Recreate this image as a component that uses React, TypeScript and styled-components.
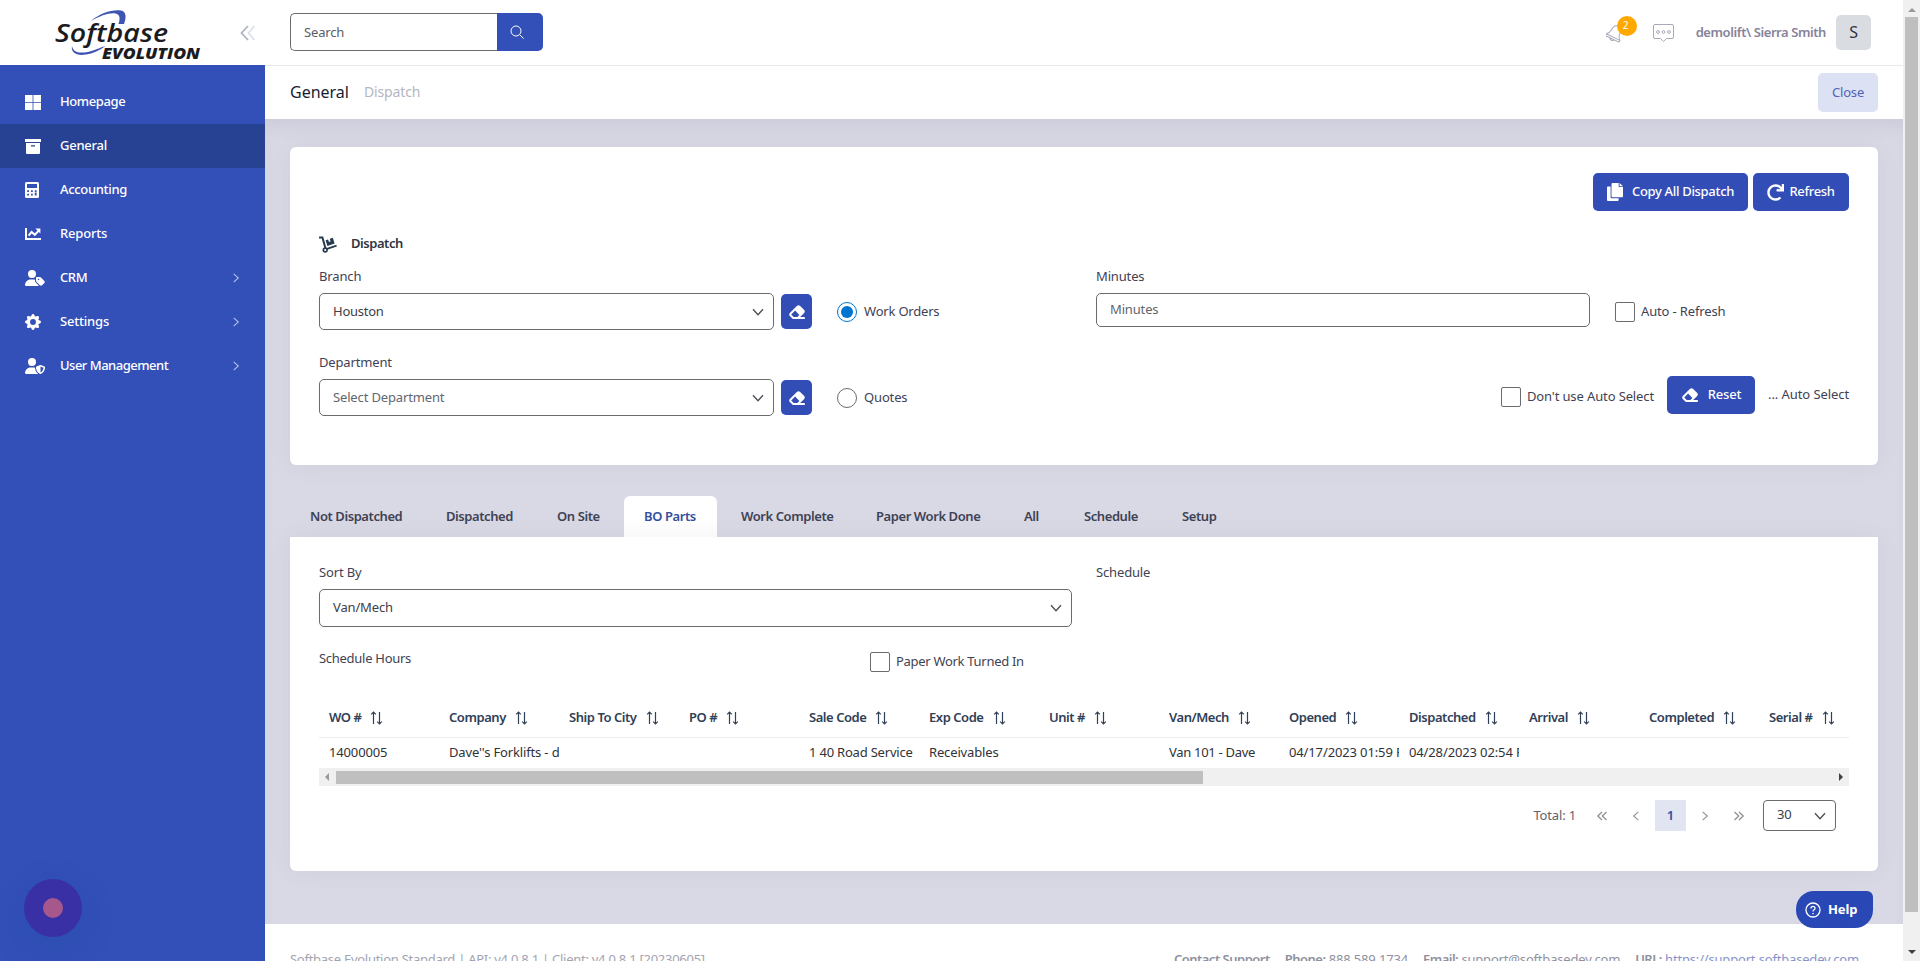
import React from 'react';
import styled, { createGlobalStyle } from 'styled-components';
import { BsGearFill } from 'react-icons/bs';
import { FaEraser, FaUserShield, FaUserTag } from 'react-icons/fa6';
import { FaRedo } from 'react-icons/fa';

const GlobalStyle = createGlobalStyle`
  * {
    box-sizing: border-box;
  }

  body {
    margin: 0;
    overflow: hidden;
    font-family: 'Noto Sans', 'Open Sans', sans-serif;
    font-size: 13px;
    line-height: 20px;
    letter-spacing: -0.15px;
    color: #3f4254;
  }
`;

interface FitProps {
  $ls?: number;
}

interface MenuEntry {
  label: string;
  icon: React.ReactNode;
  active?: boolean;
  expandable?: boolean;
  spacing?: number;
}

interface ColumnType {
  title: string;
  value?: string;
  spacing?: number;
}

const Page = styled.div`
  display: flex;
  width: 1920px;
  height: 961px;
  overflow: hidden;
  background: #fff;
`;

const Sidebar = styled.aside`
  position: relative;
  display: flex;
  flex-direction: column;
  flex: 0 0 265px;
  background: #334fb8;
`;

const Brand = styled.div`
  display: flex;
  align-items: center;
  height: 65px;
  padding-left: 50px;
  background: #fff;

  .collapse {
    margin-left: 30px;
  }
`;

const Menu = styled.nav`
  display: flex;
  flex-direction: column;
  padding-top: 15px;
`;

const MenuItem = styled.div<{ $active?: boolean }>`
  display: flex;
  align-items: center;
  height: 44px;
  padding: 0 24px 0 25px;
  color: #fff;
  font-weight: 500;
  background: ${(p) => (p.$active ? '#284293' : 'transparent')};

  .icon {
    display: flex;
    width: 35px;
  }

  .label {
    flex: 1;
  }
`;

const Text = styled.span<FitProps>`
  padding-bottom: 2px;
  white-space: nowrap;
  letter-spacing: ${(p) => (p.$ls === undefined ? -0.15 : p.$ls)}px;
`;

const Recorder = styled.div`
  position: absolute;
  left: 24px;
  top: 879px;
  display: flex;
  align-items: center;
  justify-content: center;
  width: 58px;
  height: 58px;
  border-radius: 50%;
  background: #3830a4;
  box-shadow: 0 10px 30px rgba(30, 80, 160, 0.35);

  &::after {
    content: '';
    width: 20px;
    height: 20px;
    border-radius: 50%;
    background: #a6588c;
  }
`;

const Main = styled.div`
  display: flex;
  flex-direction: column;
  flex: 0 0 1638px;
`;

const Header = styled.header`
  display: flex;
  align-items: center;
  justify-content: space-between;
  flex: 0 0 66px;
  padding: 0 32px 0 25px;
  border-bottom: 1px solid #e8e9ee;
`;

const SearchBox = styled.div`
  display: flex;
  width: 253px;
  height: 38px;
  margin-bottom: 1px;

  .field {
    flex: 1;
    padding: 8px 13px;
    border: 1px solid #6b6b6f;
    border-right: 0;
    border-radius: 5px 0 0 5px;
    color: #595d66;
  }

  .go {
    display: flex;
    align-items: center;
    justify-content: center;
    width: 46px;
    padding-right: 6px;
    border-radius: 0 5px 5px 0;
    background: #334fb8;
  }
`;

const UserBar = styled.div`
  display: flex;
  align-items: center;
  height: 100%;

  .name {
    margin-left: 22px;
    color: #87839a;
    font-weight: 600;
  }
`;

const Bell = styled.div`
  position: relative;
  display: flex;
  width: 47px;
  height: 20px;
`;

const Badge = styled.span`
  position: absolute;
  left: 11px;
  top: -7px;
  width: 20px;
  height: 20px;
  border-radius: 50%;
  background: #ffa800;
  color: #fff;
  font-size: 10px;
  line-height: 19px;
  padding-left: 6px;
`;

const Avatar = styled.div`
  width: 35px;
  height: 35px;
  margin-left: 10px;
  border-radius: 5px;
  background: #d9dde2;
  color: #2f3344;
  font-size: 16px;
  line-height: 35px;
  text-align: center;
`;

const SubHeader = styled.div`
  display: flex;
  align-items: center;
  flex: 0 0 53px;
  padding: 0 25px;

  .title {
    color: #181c32;
    font-size: 16px;
  }

  .crumb {
    flex: 1;
    margin-left: 15px;
    color: #b5b5c3;
    font-size: 14px;
  }
`;

const CloseButton = styled.button`
  width: 60px;
  height: 39px;
  padding: 0 0 2px;
  border: 0;
  border-radius: 5px;
  background: #dce1f4;
  color: #5064b8;
  font: inherit;
  letter-spacing: -0.15px;
`;

const Content = styled.main`
  display: flex;
  flex-direction: column;
  flex: 0 0 805px;
  padding: 28px 25px 0;
  background: #d9d9e5;
  box-shadow: inset 0 14px 20px -10px rgba(100, 95, 130, 0.14);
`;

const FilterCard = styled.section`
  display: flex;
  flex-direction: column;
  height: 318px;
  padding: 26px 29px;
  border-radius: 6px;
  background: #fff;
  box-shadow: 0 0 24px rgba(80, 75, 115, 0.07);
`;

const Actions = styled.div`
  display: flex;
  justify-content: flex-end;
  gap: 5px;
`;

const Button = styled.button<{ $width: number; $gap: number }>`
  display: flex;
  align-items: center;
  justify-content: center;
  gap: ${(p) => p.$gap}px;
  width: ${(p) => p.$width}px;
  height: 38px;
  padding: 0;
  border: 0;
  border-radius: 5px;
  background: #324db5;
  color: #fff;
  font: inherit;
  font-weight: 500;
`;

const SectionTitle = styled.div`
  display: flex;
  align-items: center;
  gap: 14px;
  height: 24px;
  margin-top: 21px;
  color: #30353f;
  font-weight: 600;
`;

const FilterGrid = styled.div`
  display: grid;
  grid-template-columns: 777px 1fr;
  grid-auto-rows: 86px;
  padding-top: 10px;
`;

const Column = styled.div`
  display: flex;
  flex-direction: column;
`;

const Label = styled.div<FitProps>`
  height: 20px;
  margin-bottom: 7px;
  white-space: nowrap;
  letter-spacing: ${(p) => (p.$ls === undefined ? -0.15 : p.$ls)}px;
`;

const FieldRow = styled.div<{ $end?: boolean; $height?: number }>`
  display: flex;
  align-items: center;
  justify-content: ${(p) => (p.$end ? 'flex-end' : 'flex-start')};
  height: ${(p) => p.$height || 37}px;
  margin-top: ${(p) => (p.$end ? 24 : 0)}px;
`;

const Field = styled.div<{ $width: number; $height?: number; $muted?: boolean }>`
  display: flex;
  align-items: center;
  align-self: flex-start;
  justify-content: space-between;
  width: ${(p) => p.$width}px;
  height: ${(p) => p.$height || 37}px;
  padding: 0 9px 0 13px;
  border: 1px solid #6b6b6f;
  border-radius: 5px;
  color: ${(p) => (p.$muted ? '#62666e' : '#3c4048')};
`;

const EraseButton = styled(Button)`
  height: 35px;
  margin: 0 25px 0 7px;
`;

const Radio = styled.span<{ $checked?: boolean }>`
  display: flex;
  align-items: center;
  justify-content: center;
  width: 20px;
  height: 20px;
  margin-right: 7px;
  border: 1px solid ${(p) => (p.$checked ? '#0075d0' : '#6b6b6f')};
  border-radius: 50%;

  &::after {
    content: '';
    width: 12px;
    height: 12px;
    border-radius: 50%;
    background: ${(p) => (p.$checked ? '#0075d0' : 'transparent')};
  }
`;

const Checkbox = styled.span`
  width: 20px;
  height: 20px;
  margin-right: 6px;
  border: 1px solid #6b6b6f;
  border-radius: 2px;
`;

const Option = styled.label<{ $left?: number; $drop?: number }>`
  display: flex;
  align-items: center;
  margin-left: ${(p) => p.$left || 0}px;
  padding-top: ${(p) => p.$drop || 0}px;
`;

const ResetButton = styled(Button)`
  margin: 0 13px;
`;

const Tabs = styled.div`
  display: flex;
  gap: 4px;
  height: 41px;
  margin-top: 31px;
`;

const Tab = styled.div<{ $active?: boolean; $width: number }>`
  width: ${(p) => p.$width}px;
  padding: 10px 0 0 20px;
  border-radius: 6px 6px 0 0;
  background: ${(p) => (p.$active ? '#fff' : 'transparent')};
  color: ${(p) => (p.$active ? '#334f9f' : '#3f4254')};
  font-weight: 600;
  white-space: nowrap;
  letter-spacing: -0.42px;
`;

const ResultCard = styled.section`
  display: flex;
  flex-direction: column;
  height: 334px;
  padding: 25px 29px 0;
  border-radius: 0 0 6px 6px;
  background: #fff;
  box-shadow: 0 0 24px rgba(80, 75, 115, 0.07);
`;

const SortRow = styled.div`
  display: grid;
  grid-template-columns: 777px 1fr;
  height: 86px;
`;

const HoursRow = styled.div`
  display: grid;
  grid-template-columns: 551px 1fr;
  height: 47px;
`;

const Table = styled.div`
  overflow: hidden;
  width: 1530px;
`;

const TableRow = styled.div<{ $head?: boolean }>`
  display: flex;
  height: ${(p) => (p.$head ? 43 : 30)}px;
  padding-top: ${(p) => (p.$head ? 4 : 0)}px;
  border-bottom: ${(p) => (p.$head ? '1px solid #ebedf3' : '0')};
  color: ${(p) => (p.$head ? '#304056' : '#303238')};
  font-weight: ${(p) => (p.$head ? 600 : 400)};
`;

const Cell = styled.div`
  display: flex;
  align-items: center;
  gap: 9px;
  flex: 0 0 120px;
  padding-left: 10px;

  .clip {
    overflow: hidden;
    width: 110px;
  }
`;

const HScroll = styled.div`
  display: flex;
  align-items: center;
  justify-content: space-between;
  height: 18px;
  padding: 0 4px;
  background: #f0f0f0;

  .thumb {
    width: 867px;
    height: 13px;
    margin: 0 auto 0 5px;
    background: #bfbfbf;
  }
`;

const Pager = styled.div`
  display: flex;
  align-items: center;
  justify-content: flex-end;
  height: 31px;
  margin-top: 14px;
  padding-right: 13px;
  color: #5f636b;

  .total {
    margin-right: 9px;
  }

  .page {
    width: 31px;
    height: 31px;
    margin: 0 2px;
    background: #e1e5f2;
    color: #334f9f;
    font-weight: 600;
    line-height: 31px;
    text-align: center;
  }

  .arrow {
    display: flex;
    justify-content: center;
    width: 34px;
  }
`;

const PageSize = styled.div`
  display: flex;
  align-items: center;
  justify-content: space-between;
  width: 73px;
  height: 31px;
  margin-left: 7px;
  padding: 0 9px 0 13px;
  border: 1px solid #6b6b6f;
  border-radius: 4px;
  color: #3c4048;

  span {
    padding-bottom: 4px;
  }
`;

const Footer = styled.footer`
  display: flex;
  justify-content: space-between;
  padding: 25px 44px 0 25px;
  color: #a2a3b0;
  white-space: nowrap;

  .contact {
    display: flex;
    gap: 15px;
    color: #8f91a0;
    letter-spacing: -0.18px;
  }

  b {
    font-weight: 600;
    letter-spacing: -0.5px;
  }

  .link {
    color: #8793cc;
  }
`;

const HelpButton = styled.div`
  position: absolute;
  left: 1796px;
  top: 891px;
  display: flex;
  align-items: center;
  gap: 7px;
  width: 77px;
  height: 37px;
  padding-left: 9px;
  border-radius: 18px 6px 18px 18px;
  background: #2948b6;
  color: #fff;
  font-weight: 700;
`;

const PageScroll = styled.div`
  display: flex;
  flex-direction: column;
  align-items: center;
  justify-content: space-between;
  flex: 0 0 17px;
  padding: 6px 0 5px;
  background: #f0f0f0;

  .thumb {
    width: 13px;
    height: 895px;
    margin: 3px 0 auto;
    background: #bfbfbf;
  }
`;

const Chevron = ({ size = 12, color = '#4a4d55', dir = 'down', double = false }) => {
  const turn = { down: 0, left: 90, right: -90 }[dir];
  return (
    <svg width={size} height={size} viewBox="0 0 12 12" fill="none" stroke={color} strokeWidth="1.3">
      <g transform={`rotate(${turn} 6 6)`}>
        {double ? <path d="M2 1.5 6 5.7 10 1.5M2 6 6 10.2 10 6" /> : <path d="M1 3.2 6 8.8 11 3.2" />}
      </g>
    </svg>
  );
};

const Triangle = ({ dir, color }: { dir: number; color: string }) => (
  <svg width="8" height="8" viewBox="0 0 8 8">
    <path d="M0 6 4 2 8 6Z" fill={color} transform={`rotate(${dir} 4 4)`} />
  </svg>
);

const SortIcon = () => (
  <svg width="13" height="14" viewBox="0 0 13 14" fill="none" stroke="#304056" strokeWidth="1.2">
    <path d="M3.5 13V1M1.2 3.4 3.5 1l2.3 2.4M9.5 1v12M7.2 10.6 9.5 13l2.3-2.4" />
  </svg>
);

const HomeIcon = () => (
  <svg width="16" height="15" viewBox="0 0 16 15" fill="#fff">
    <path d="M0 0h7.6v7H0zM8.4 0H16v7H8.4zM0 7.8h7.6V15H0zM8.4 7.8H16V15H8.4z" />
  </svg>
);

const ArchiveIcon = () => (
  <svg width="16" height="15" viewBox="0 0 16 15" fill="#fff">
    <path d="M0 0h16v3H0z" />
    <path d="M1 4h14v10a1 1 0 0 1-1 1H2a1 1 0 0 1-1-1zM6 6.2v1.2h4V6.2z" fillRule="evenodd" />
  </svg>
);

const CalculatorIcon = () => (
  <svg width="14" height="16" viewBox="0 0 14 16">
    <rect width="14" height="16" rx="1.5" fill="#fff" />
    <path
      d="M2 2h10v4H2zM2.2 8.2h1.8v1.8h-1.8zM6 8.2h1.8v1.8H6zM9.8 8.2h1.8v1.8H9.8zM2.2 11.8h1.8v1.8h-1.8zM6 11.8h1.8v1.8H6zM9.8 10.4h1.8v3.2H9.8z"
      fill="#334fb8"
    />
  </svg>
);

const ReportIcon = () => (
  <svg width="16" height="14" viewBox="0 0 16 14" fill="none" stroke="#fff" strokeWidth="2">
    <path d="M1 1v11h15" />
    <path d="M3.6 8.6 6.6 5l3.2 2.8 4-4.2" />
    <path d="M10.4 1.4h5v5z" fill="#fff" stroke="none" />
  </svg>
);

const CopyIcon = () => (
  <svg width="16" height="18" viewBox="0 0 16 18" fill="#fff">
    <path d="M5.5 0h6.2v4H16v9.2a1 1 0 0 1-1 1H5.5a1 1 0 0 1-1-1V1a1 1 0 0 1 1-1zM12.6 0 16 3.2h-3.4z" />
    <path d="M3.6 3.4H1a1 1 0 0 0-1 1V17a1 1 0 0 0 1 1h9.6a1 1 0 0 0 1-1v-1.8H4.6a1 1 0 0 1-1-1z" />
  </svg>
);

const DollyIcon = () => (
  <svg width="18" height="17" viewBox="0 0 18 17" fill="none" stroke="#263a50">
    <path d="M0 1.4h3.4L6.4 12" strokeWidth="2" />
    <path d="M7.2 13.2 17.6 9.6" strokeWidth="1.8" />
    <circle cx="6.2" cy="14" r="1.9" strokeWidth="1.6" />
    <path d="m6.6 4.2 2.4-.8 1 2.6 1.6-.5-.8-2.8 3-.9 1.8 5.8-7.2 2.4z" fill="#263a50" stroke="none" />
  </svg>
);

const Logo = () => (
  <svg width="160" height="56" viewBox="50 5 160 56">
    <path d="M91 21C100 13 113 9 121 10.5c5 1.2 5.8 6 3 13.5h-5.5c2-6 1.5-9.5-3-10.5-6-1-15 2-24.5 7.5z" fill="#3f55b3" />
    <path d="M72 46c-1.5 7 5 10 14 8.5 7-1 14-4 19.5-8.5-9 3-15 6-21.5 6.5-7 .5-11-1-12-6.5z" fill="#3f55b3" />
    <g fill="#1c1b1e" fontFamily="'Open Sans', sans-serif" fontStyle="italic" letterSpacing="0">
      <text x="55" y="41.5" fontSize="25" fontWeight="600" textLength="113" lengthAdjust="spacingAndGlyphs">
        Softbase
      </text>
      <text x="102" y="58.5" fontSize="16" fontWeight="800" textLength="98" lengthAdjust="spacingAndGlyphs">
        EVOLUTION
      </text>
    </g>
  </svg>
);

const BellIcon = () => (
  <svg width="20" height="20" viewBox="0 0 20 20" fill="none" stroke="#a9a9b8" strokeWidth="1">
    <g transform="rotate(26 9 10)">
      <path d="M1.5 14.5c2-1.8 3-3.5 3-6.5 0-3.5 1.8-5.5 4.5-5.5s4.5 2 4.5 5.5c0 3 1 4.7 3 6.5zM1.5 14.5v2h15v-2M6.5 16.5c.6 2 4.4 2 5 0" />
    </g>
  </svg>
);

const ChatIcon = () => (
  <svg width="21" height="20" viewBox="0 0 21 20" fill="none" stroke="#a9a9b8" strokeWidth="1">
    <path d="M2 1.5h17a1.5 1.5 0 0 1 1.5 1.5v11a1.5 1.5 0 0 1-1.5 1.5h-5.5l-3 3-3-3H2A1.5 1.5 0 0 1 .5 14V3A1.5 1.5 0 0 1 2 1.5z" />
    <circle cx="5" cy="9" r="1.4" />
    <circle cx="10.5" cy="9" r="1.4" />
    <circle cx="16" cy="9" r="1.4" />
  </svg>
);

const menu: Array<MenuEntry> = [
  { label: 'Homepage', icon: <HomeIcon /> },
  { label: 'General', icon: <ArchiveIcon />, active: true, spacing: -0.25 },
  { label: 'Accounting', icon: <CalculatorIcon />, spacing: -0.32 },
  { label: 'Reports', icon: <ReportIcon />, spacing: -0.2 },
  { label: 'CRM', icon: <FaUserTag size={20} />, expandable: true },
  { label: 'Settings', icon: <BsGearFill size={16} />, expandable: true, spacing: -0.2 },
  { label: 'User Management', icon: <FaUserShield size={20} />, expandable: true, spacing: -0.5 },
];

const tabs = [
  { label: 'Not Dispatched', width: 132 },
  { label: 'Dispatched', width: 107 },
  { label: 'On Site', width: 83 },
  { label: 'BO Parts', width: 93 },
  { label: 'Work Complete', width: 131 },
  { label: 'Paper Work Done', width: 144 },
  { label: 'All', width: 56 },
  { label: 'Schedule', width: 94 },
  { label: 'Setup', width: 75 },
];

const columns: Array<ColumnType> = [
  { title: 'WO #', value: '14000005' },
  { title: 'Company', value: "Dave''s Forklifts - d", spacing: -0.15 },
  { title: 'Ship To City' },
  { title: 'PO #' },
  { title: 'Sale Code', value: '1 40 Road Service', spacing: -0.2 },
  { title: 'Exp Code', value: 'Receivables', spacing: -0.15 },
  { title: 'Unit #' },
  { title: 'Van/Mech', value: 'Van 101 - Dave', spacing: -0.3 },
  { title: 'Opened', value: '04/17/2023 01:59 PM', spacing: -0.13 },
  { title: 'Dispatched', value: '04/28/2023 02:54 PM', spacing: -0.13 },
  { title: 'Arrival' },
  { title: 'Completed' },
  { title: 'Serial #' },
];

const SidebarPanel = () => (
  <Sidebar>
    <Brand>
      <Logo />
      <svg className="collapse" width="16" height="16" viewBox="0 0 16 16" fill="none" strokeWidth="1.8">
        <path d="M8 1 1.5 8 8 15" stroke="#b0b3c4" />
        <path d="M14.5 1 8.5 8l6 7" stroke="#dfe1ea" />
      </svg>
    </Brand>
    <Menu>
      {menu.map((item) => (
        <MenuItem key={item.label} $active={item.active}>
          <span className="icon">{item.icon}</span>
          <Text className="label" $ls={item.spacing ?? -0.4}>
            {item.label}
          </Text>
          {item.expandable && <Chevron size={10} color="#b7c1ea" dir="right" />}
        </MenuItem>
      ))}
    </Menu>
    <Recorder />
  </Sidebar>
);

const Filters = () => (
  <FilterCard>
    <Actions>
      <Button $width={155} $gap={9}>
        <CopyIcon />
        <Text $ls={-0.32}>Copy All Dispatch</Text>
      </Button>
      <Button $width={96} $gap={5}>
        <FaRedo size={17} />
        <Text $ls={-0.32}>Refresh</Text>
      </Button>
    </Actions>
    <SectionTitle>
      <DollyIcon />
      <Text $ls={-0.45}>Dispatch</Text>
    </SectionTitle>
    <FilterGrid>
      <Column>
        <Label>Branch</Label>
        <FieldRow>
          <Field $width={455}>
            <Text $ls={-0.25}>Houston</Text>
            <Chevron />
          </Field>
          <EraseButton $width={31} $gap={0}>
            <FaEraser size={18} />
          </EraseButton>
          <Radio $checked />
          <Text $ls={-0.2}>Work Orders</Text>
        </FieldRow>
      </Column>
      <Column>
        <Label>Minutes</Label>
        <FieldRow>
          <Field $width={494} $height={34} $muted>
            <Text>Minutes</Text>
          </Field>
          <Option $left={25}>
            <Checkbox />
            <Text>Auto - Refresh</Text>
          </Option>
        </FieldRow>
      </Column>
      <Column>
        <Label>Department</Label>
        <FieldRow>
          <Field $width={455} $muted>
            <Text>Select Department</Text>
            <Chevron />
          </Field>
          <EraseButton $width={31} $gap={0}>
            <FaEraser size={18} />
          </EraseButton>
          <Radio />
          <Text>Quotes</Text>
        </FieldRow>
      </Column>
      <FieldRow $end $height={38}>
        <Option $drop={4}>
          <Checkbox />
          <Text $ls={-0.12}>Don't use Auto Select</Text>
        </Option>
        <ResetButton $width={88} $gap={9}>
          <FaEraser size={18} />
          <Text>Reset</Text>
        </ResetButton>
        <Text $ls={-0.08}>... Auto Select</Text>
      </FieldRow>
    </FilterGrid>
  </FilterCard>
);

const Results = () => (
  <ResultCard>
    <SortRow>
      <Column>
        <Label>Sort By</Label>
        <Field $width={753} $height={38}>
          <Text>Van/Mech</Text>
          <Chevron />
        </Field>
      </Column>
      <Label>Schedule</Label>
    </SortRow>
    <HoursRow>
      <Label $ls={-0.28}>Schedule Hours</Label>
      <FieldRow $height={27}>
        <Checkbox />
        <Text $ls={-0.3}>Paper Work Turned In</Text>
      </FieldRow>
    </HoursRow>
    <Table>
      <TableRow $head>
        {columns.map((column) => (
          <Cell key={column.title}>
            <Text $ls={-0.45}>{column.title}</Text>
            <SortIcon />
          </Cell>
        ))}
      </TableRow>
      <TableRow>
        {columns.map((column) => (
          <Cell key={column.title}>
            <Text className="clip" $ls={column.spacing}>
              {column.value}
            </Text>
          </Cell>
        ))}
      </TableRow>
      <HScroll>
        <Triangle dir={-90} color="#9a9a9a" />
        <div className="thumb" />
        <Triangle dir={90} color="#404040" />
      </HScroll>
    </Table>
    <Pager>
      <Text className="total">Total: 1</Text>
      <span className="arrow">
        <Chevron dir="left" double color="#8d9097" />
      </span>
      <span className="arrow">
        <Chevron dir="left" size={10} color="#8d9097" />
      </span>
      <span className="page">1</span>
      <span className="arrow">
        <Chevron dir="right" size={10} color="#8d9097" />
      </span>
      <span className="arrow">
        <Chevron dir="right" double color="#8d9097" />
      </span>
      <PageSize>
        <Text>30</Text>
        <Chevron />
      </PageSize>
    </Pager>
  </ResultCard>
);

const App: React.FunctionComponent = () => {
  return (
    <Page>
      <GlobalStyle />
      <SidebarPanel />
      <Main>
        <Header>
          <SearchBox>
            <div className="field">Search</div>
            <div className="go">
              <svg width="14" height="14" viewBox="0 0 14 14" fill="none" stroke="#fff" strokeWidth="1">
                <circle cx="6" cy="6" r="5" />
                <path d="m9.6 9.6 4 4" />
              </svg>
            </div>
          </SearchBox>
          <UserBar>
            <Bell>
              <BellIcon />
              <Badge>2</Badge>
            </Bell>
            <ChatIcon />
            <Text className="name" $ls={-0.42}>
              demolift\ Sierra Smith
            </Text>
            <Avatar>S</Avatar>
          </UserBar>
        </Header>
        <SubHeader>
          <Text className="title" $ls={0}>
            General
          </Text>
          <Text className="crumb">Dispatch</Text>
          <CloseButton>Close</CloseButton>
        </SubHeader>
        <Content>
          <Filters />
          <Tabs>
            {tabs.map((tab) => (
              <Tab key={tab.label} $width={tab.width} $active={tab.label === 'BO Parts'}>
                {tab.label}
              </Tab>
            ))}
          </Tabs>
          <Results />
        </Content>
        <Footer>
          <Text $ls={-0.27}>Softbase Evolution Standard | API: v4.0.8.1 | Client: v4.0.8.1 [20230605]</Text>
          <div className="contact">
            <b>Contact Support</b>
            <span>
              <b>Phone:</b> 888.589.1734
            </span>
            <span>
              <b>Email:</b> support@softbasedev.com
            </span>
            <span>
              <b>URL:</b> <span className="link">https://support.softbasedev.com</span>
            </span>
          </div>
        </Footer>
      </Main>
      <PageScroll>
        <Triangle dir={0} color="#9a9a9a" />
        <div className="thumb" />
        <Triangle dir={180} color="#404040" />
      </PageScroll>
      <HelpButton>
        <svg width="16" height="16" viewBox="0 0 16 16" fill="none" stroke="#fff" strokeWidth="1.3">
          <circle cx="8" cy="8" r="7" />
          <path d="M6 6.4c0-2.6 4-2.6 4 0 0 1.4-2 1.4-2 3M8 11v1.3" />
        </svg>
        <Text>Help</Text>
      </HelpButton>
    </Page>
  );
};

export default App;
